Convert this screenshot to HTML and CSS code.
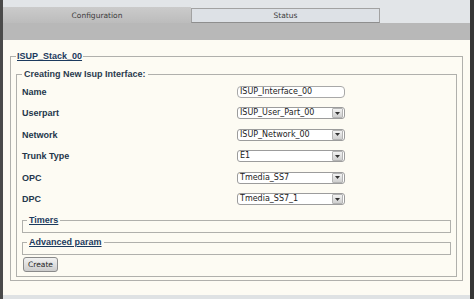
FILE: index.html
```html
<!DOCTYPE html>
<html lang="en">
<head>
  <meta charset="UTF-8">
  <title>ISUP Configuration</title>
  <link rel="stylesheet" href="styles.css">
</head>
<body>

<div id="window">
  <div class="edge left"></div>
  <div class="main">
    <div class="top-strip"></div>
    <div class="tabs">
      <div class="tab active">Configuration</div>
      <div class="tab">Status</div>
    </div>
    <div class="tab-band"></div>

    <div class="content">
      <fieldset class="stack">
        <legend class="link">ISUP_Stack_00</legend>

        <fieldset class="create">
          <legend>Creating New Isup Interface:</legend>

          <div class="row">
            <label>Name</label>
            <input class="field" type="text" value="ISUP_Interface_00">
          </div>
          <div class="row">
            <label>Userpart</label>
            <div class="select"><span>ISUP_User_Part_00</span><i class="arrow"><svg width="5" height="3" viewBox="0 0 5 3"><path d="M0 0h5L2.5 3z" fill="#333"/></svg></i></div>
          </div>
          <div class="row">
            <label>Network</label>
            <div class="select"><span>ISUP_Network_00</span><i class="arrow"><svg width="5" height="3" viewBox="0 0 5 3"><path d="M0 0h5L2.5 3z" fill="#333"/></svg></i></div>
          </div>
          <div class="row">
            <label>Trunk Type</label>
            <div class="select"><span>E1</span><i class="arrow"><svg width="5" height="3" viewBox="0 0 5 3"><path d="M0 0h5L2.5 3z" fill="#333"/></svg></i></div>
          </div>
          <div class="row">
            <label>OPC</label>
            <div class="select"><span>Tmedia_SS7</span><i class="arrow"><svg width="5" height="3" viewBox="0 0 5 3"><path d="M0 0h5L2.5 3z" fill="#333"/></svg></i></div>
          </div>
          <div class="row">
            <label>DPC</label>
            <div class="select"><span>Tmedia_SS7_1</span><i class="arrow"><svg width="5" height="3" viewBox="0 0 5 3"><path d="M0 0h5L2.5 3z" fill="#333"/></svg></i></div>
          </div>

          <fieldset class="sub first">
            <legend class="link">Timers</legend>
          </fieldset>
          <fieldset class="sub">
            <legend class="link">Advanced param</legend>
          </fieldset>

          <button class="btn">Create</button>
        </fieldset>
      </fieldset>
    </div>

    <div class="bottom-strip"></div>
  </div>
  <div class="edge right"></div>
</div>

</body>
</html>
```

FILE: styles.css
```css
html, body {
  margin: 0;
  padding: 0;
  overflow: hidden;
}

body {
  font-family: "Liberation Sans", Arial, sans-serif;
  background-color: #e2e5e8;
}

#window {
  display: flex;
  width: 474px;
  height: 299px;
}

.edge {
  flex: none;
}

.edge.left {
  width: 3px;
  background-color: #4a4a4a;
}

.edge.right {
  width: 4px;
  background-color: #363636;
}

.main {
  flex: 1;
  min-width: 0;
  display: flex;
  flex-direction: column;
  background-color: #e2e5e8;
}

.top-strip {
  height: 7px;
}

.tabs {
  display: flex;
  height: 16px;
}

.tab {
  box-sizing: border-box;
  display: flex;
  align-items: center;
  justify-content: center;
  font-family: "DejaVu Sans", sans-serif;
  font-size: 7.5px;
  color: #3c3c3c;
}

.tab.active {
  width: 188px;
  background: linear-gradient(#cbcbcb, #bcbcbc);
}

.tab:not(.active) {
  width: 189px;
  margin-top: 1px;
  border: 1px solid #a2a2a2;
  border-bottom-color: #8e8e8e;
  background-color: #dde1e6;
}

.tab-band {
  height: 17px;
  background-color: #b8b8b8;
}

.content {
  flex: 1;
  padding: 10px 7px 0;
  background-color: #fdfbf3;
}

.bottom-strip {
  height: 4px;
  background-color: #dfe2e4;
}

fieldset {
  margin: 0;
  min-width: 0;
  border: 1px solid #b0b0ac;
}

legend {
  padding: 0 2px;
  font-size: 9px;
  font-weight: bold;
  line-height: 12px;
  color: #2a3a4e;
}

legend.link {
  color: #1c3a5e;
  text-decoration: underline;
}

.stack {
  padding: 6px 5px 3px;
}

.stack > legend {
  padding: 0 1px;
}

.create {
  padding: 1px 5px 4px;
}

.row {
  display: flex;
  align-items: center;
  height: 21.5px;
}

.row label {
  width: 215px;
  font-size: 9px;
  font-weight: bold;
  color: #24364b;
}

.field,
.select {
  box-sizing: border-box;
  width: 108px;
  height: 12px;
  margin: 0;
  padding: 0 2px;
  border: 1px solid #9c9c9c;
  border-radius: 3px;
  background-color: #fff;
  font-family: "DejaVu Sans", sans-serif;
  font-size: 8px;
  color: #222;
}

.field {
  border-color: #a8a8a8;
  border-radius: 4px;
  outline: none;
}

.select {
  display: flex;
  align-items: center;
  justify-content: space-between;
  padding-right: 1px;
  line-height: 10px;
}

.arrow {
  display: flex;
  align-items: center;
  justify-content: center;
  width: 9px;
  height: 8px;
  border: 1px solid #b4b4b4;
  border-radius: 1px;
  background: linear-gradient(#f2f2f2, #cfcfcf);
}

.sub {
  height: 19px;
  box-sizing: border-box;
  padding: 0 4px 6px;
  margin-top: 3px;
}

.sub.first {
  margin-top: 4px;
}

.btn {
  display: block;
  width: 35px;
  height: 15px;
  margin: 2px 0 0 1px;
  padding: 0;
  border: 1px solid #8a8a8a;
  border-radius: 3px;
  background: linear-gradient(#f2f2f2, #cccccc);
  font-family: "DejaVu Sans", sans-serif;
  font-size: 7.5px;
  color: #222;
}
```
